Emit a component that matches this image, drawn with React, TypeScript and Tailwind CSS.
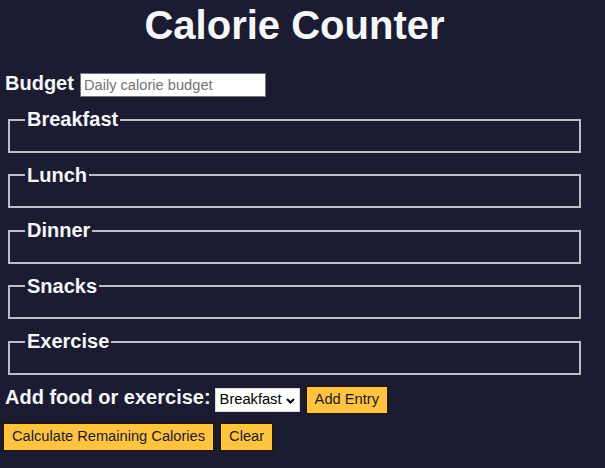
import React from "react";

const sections = ["Breakfast", "Lunch", "Dinner", "Snacks", "Exercise"];

export default function App() {
  return (
    <div className="min-h-screen bg-[#1b1b32] text-[#f5f6f7] font-['Liberation_Sans',Arial,sans-serif]">
      <div className="ml-[5px] w-[579px] pt-[2px]">
        <h1 className="text-center text-[40px] font-bold leading-[46px]">Calorie Counter</h1>
        <div className="mt-[24px] flex items-baseline gap-[6px]">
          <label className="text-[20px] font-bold leading-[23px]">Budget</label>
          <input
            type="number"
            placeholder="Daily calorie budget"
            className="h-[24px] w-[186px] border border-[#767676] bg-white px-[3px] text-[14.67px] leading-[17px] text-black outline-none placeholder:text-[#757575]"
          />
        </div>
        <div className="mt-[11px] flex flex-col gap-[11px]">
          {sections.map((s) => (
            <fieldset
              key={s}
              className="mx-[3px] border-2 border-[#bdbdc6] px-[15px] pb-[12.5px] pt-[7px]"
            >
              <legend className="px-[2px] text-[20px] font-bold leading-[23px]">{s}</legend>
              <div />
            </fieldset>
          ))}
        </div>
        <div className="mt-[10px] flex items-baseline">
          <label className="text-[20px] font-bold leading-[23px]">Add food or exercise:</label>
          <div className="relative ml-[4px] flex h-[24px] w-[85px] items-center border border-[#d8d8d8] bg-white pl-[4px] text-[14.67px] leading-[17px] text-black">
            <span>Breakfast</span>
            <svg
              className="absolute right-[4px] top-[9px]"
              width="9"
              height="6"
              viewBox="0 0 9 6"
              fill="none"
              stroke="black"
              strokeWidth="2"
            >
              <polyline points="1,1 4.5,4.5 8,1" />
            </svg>
          </div>
          <button className="ml-[5px] h-[30px] border-2 border-[#21180c] bg-[#fec440] px-[8px] text-[14.67px] leading-[17px] text-[#1b1b32]">
            Add Entry
          </button>
        </div>
        <div className="-ml-[3px] mt-[7px] flex gap-[4px]">
          <button className="h-[30px] border-2 border-[#21180c] bg-[#fec440] px-[8px] text-[14.67px] leading-[17px] text-[#1b1b32]">
            Calculate Remaining Calories
          </button>
          <button className="h-[30px] border-2 border-[#21180c] bg-[#fec440] px-[8px] text-[14.67px] leading-[17px] text-[#1b1b32]">
            Clear
          </button>
        </div>
      </div>
    </div>
  );
}
